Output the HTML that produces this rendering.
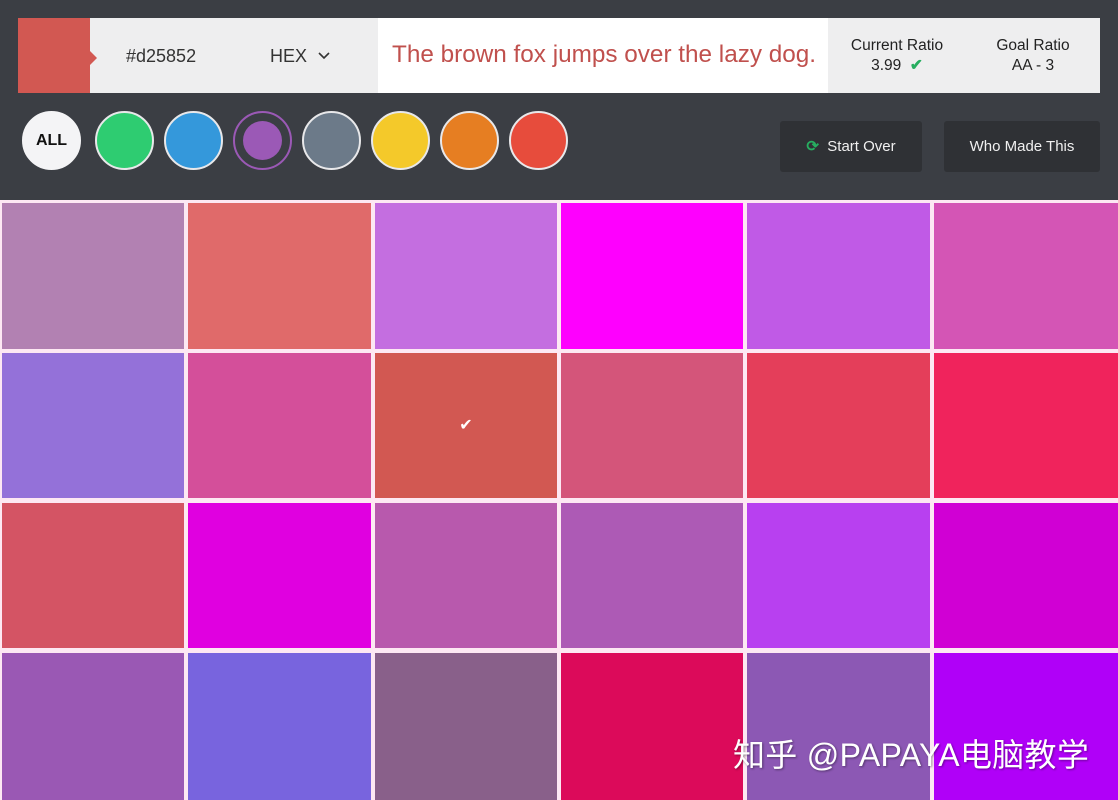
<!DOCTYPE html>
<html><head><meta charset="utf-8"><style>
*{margin:0;padding:0;box-sizing:border-box}
body{width:1118px;height:800px;overflow:hidden;background:#3b3e44;font-family:"Liberation Sans",sans-serif;position:relative}
.abs{position:absolute}
.grid{position:absolute;left:0;top:200px;width:1118px;height:600px;background:#fde8f3}
.c{position:absolute}
.circ{position:absolute;top:111px;width:59px;height:59px;border-radius:50%;border:2px solid #e8e8ea}
.btn{position:absolute;top:121px;height:51px;background:#2f3135;border-radius:3px;color:#f0f0f0;font-size:15px;line-height:51px;text-align:center}
</style></head><body>
<div class="abs" style="left:18px;top:18px;width:72px;height:75px;background:#d25852"></div>
<div class="abs" style="left:90px;top:18px;width:288px;height:75px;background:#eeeeef"></div>
<div class="abs" style="left:90px;top:51px;width:0;height:0;border-top:7px solid transparent;border-bottom:7px solid transparent;border-left:7px solid #d25852"></div>
<div class="abs" style="left:126px;top:46px;font-size:18px;color:#333">#d25852</div>
<div class="abs" style="left:270px;top:46px;font-size:18px;color:#333">HEX</div>
<svg class="abs" style="left:317px;top:51px" width="14" height="10"><path d="M2 2 L7 7 L12 2" stroke="#333" stroke-width="1.6" fill="none"/></svg>
<div class="abs" style="left:378px;top:18px;width:450px;height:75px;background:#fff"></div>
<div class="abs" style="left:392px;top:41px;font-size:24.3px;color:#c0504d">The brown fox jumps over the lazy dog.</div>
<div class="abs" style="left:828px;top:18px;width:272px;height:75px;background:#eeeeef"></div>
<div class="abs" style="left:838px;top:36px;width:118px;text-align:center;font-size:15.5px;color:#222;line-height:20px">Current Ratio<br>3.99 &nbsp;<span style="color:#27ae60;font-weight:bold">✔</span></div>
<div class="abs" style="left:974px;top:36px;width:118px;text-align:center;font-size:15.5px;color:#222;line-height:20px">Goal Ratio<br>AA - 3</div>

<div class="circ" style="left:22px;background:#f4f4f6;border-color:#f4f4f6;text-align:center;line-height:55px;font-weight:bold;font-size:16px;color:#111">ALL</div>
<div class="circ" style="left:95px;background:#2ecc71"></div>
<div class="circ" style="left:164px;background:#3498db"></div>
<div class="circ" style="left:233px;background:transparent;border-color:#9b59b6"></div>
<div class="abs" style="left:243px;top:121px;width:39px;height:39px;border-radius:50%;background:#9b59b6"></div>
<div class="circ" style="left:302px;background:#6c7a89"></div>
<div class="circ" style="left:371px;background:#f4c92a"></div>
<div class="circ" style="left:440px;background:#e67e22"></div>
<div class="circ" style="left:509px;background:#e74c3c"></div>

<div class="btn" style="left:780px;width:142px"><span style="color:#27ae60;font-weight:bold">⟳</span>&nbsp;&nbsp;Start Over</div>
<div class="btn" style="left:944px;width:156px">Who Made This</div>

<div class="grid">
<div class="c" style="left:2px;top:3px;width:182px;height:146px;background:#b281b2"></div>
<div class="c" style="left:188px;top:3px;width:183px;height:146px;background:#e06a6a"></div>
<div class="c" style="left:375px;top:3px;width:182px;height:146px;background:#c46ee0"></div>
<div class="c" style="left:561px;top:3px;width:182px;height:146px;background:#fe00fe"></div>
<div class="c" style="left:747px;top:3px;width:183px;height:146px;background:#c05ae6"></div>
<div class="c" style="left:934px;top:3px;width:184px;height:146px;background:#d455b5"></div>

<div class="c" style="left:2px;top:153px;width:182px;height:145px;background:#9471d9"></div>
<div class="c" style="left:188px;top:153px;width:183px;height:145px;background:#d44f9a"></div>
<div class="c" style="left:375px;top:153px;width:182px;height:145px;background:#d25852;color:#fff;text-align:center;line-height:145px;font-size:16px">✔</div>
<div class="c" style="left:561px;top:153px;width:182px;height:145px;background:#d4557a"></div>
<div class="c" style="left:747px;top:153px;width:183px;height:145px;background:#e43e5a"></div>
<div class="c" style="left:934px;top:153px;width:184px;height:145px;background:#f0235c"></div>

<div class="c" style="left:2px;top:303px;width:182px;height:145px;background:#d45464"></div>
<div class="c" style="left:188px;top:303px;width:183px;height:145px;background:#e000e0"></div>
<div class="c" style="left:375px;top:303px;width:182px;height:145px;background:#b859ad"></div>
<div class="c" style="left:561px;top:303px;width:182px;height:145px;background:#ad5ab5"></div>
<div class="c" style="left:747px;top:303px;width:183px;height:145px;background:#b840f0"></div>
<div class="c" style="left:934px;top:303px;width:184px;height:145px;background:#d000d4"></div>

<div class="c" style="left:2px;top:453px;width:182px;height:147px;background:#9a58b4"></div>
<div class="c" style="left:188px;top:453px;width:183px;height:147px;background:#7864de"></div>
<div class="c" style="left:375px;top:453px;width:182px;height:147px;background:#89608a"></div>
<div class="c" style="left:561px;top:453px;width:182px;height:147px;background:#dc0a5a"></div>
<div class="c" style="left:747px;top:453px;width:183px;height:147px;background:#8c58b4"></div>
<div class="c" style="left:934px;top:453px;width:184px;height:147px;background:#b000f8"></div>
</div>
<div class="abs" style="left:733px;top:730px;font-size:32px;letter-spacing:0.3px;color:#fff;text-shadow:1px 1px 2px rgba(0,0,0,.4);font-family:'Liberation Sans','Noto Sans CJK SC',sans-serif;white-space:nowrap">知乎 @PAPAYA电脑教学</div>
</body></html>
